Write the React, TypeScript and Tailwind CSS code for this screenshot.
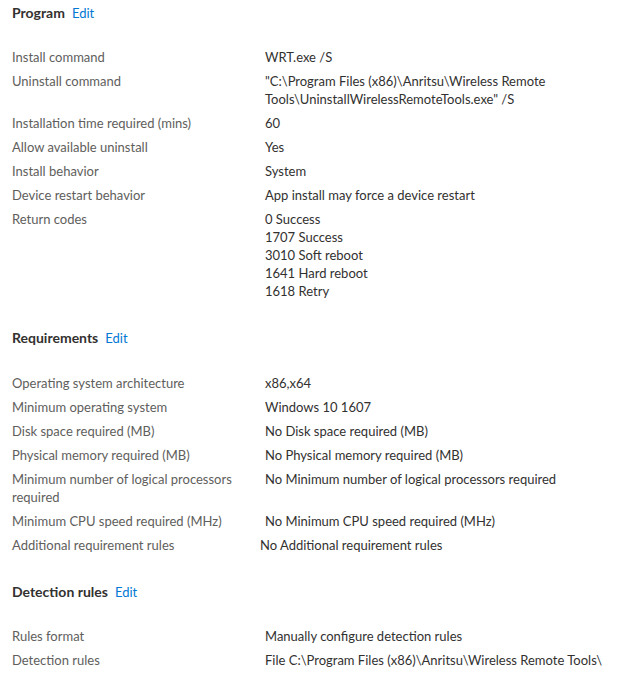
import React from "react";

type Row = { label: string; value: React.ReactNode; shift?: boolean };

function Section({ title, rows, wide }: { title: string; rows: Row[]; wide?: boolean }) {
  return (
    <section className="mb-[29px]">
      <div
        className={`flex items-baseline gap-[7px] h-[18px] leading-[18px] ${wide ? "mb-[27px]" : "mb-[26px]"}`}
      >
        <span className="text-[14px] font-bold text-[#323130]">{title}</span>
        <span className="text-[13px] text-[#0078d4]">Edit</span>
      </div>
      <div className="flex flex-col gap-[6px]">
        {rows.map((r) => (
          <div key={r.label} className="flex leading-[18px] text-[13px]">
            <div className="w-[253px] shrink-0 pr-[20px] text-[#605e5c]">{r.label}</div>
            <div className={`flex-1 pr-3 text-[#323130] ${r.shift ? "-ml-[5px]" : ""}`}>{r.value}</div>
          </div>
        ))}
      </div>
    </section>
  );
}

export default function App() {
  const program: Row[] = [
    { label: "Install command", value: "WRT.exe /S" },
    {
      label: "Uninstall command",
      value: '"C:\\Program Files (x86)\\Anritsu\\Wireless Remote Tools\\UninstallWirelessRemoteTools.exe" /S',
    },
    { label: "Installation time required (mins)", value: "60" },
    { label: "Allow available uninstall", value: "Yes" },
    { label: "Install behavior", value: "System" },
    { label: "Device restart behavior", value: "App install may force a device restart" },
    {
      label: "Return codes",
      value: (
        <div className="flex flex-col">
          <span>0 Success</span>
          <span>1707 Success</span>
          <span>3010 Soft reboot</span>
          <span>1641 Hard reboot</span>
          <span>1618 Retry</span>
        </div>
      ),
    },
  ];
  const reqs: Row[] = [
    { label: "Operating system architecture", value: "x86,x64" },
    { label: "Minimum operating system", value: "Windows 10 1607" },
    { label: "Disk space required (MB)", value: "No Disk space required (MB)" },
    { label: "Physical memory required (MB)", value: "No Physical memory required (MB)" },
    {
      label: "Minimum number of logical processors required",
      value: "No Minimum number of logical processors required",
    },
    { label: "Minimum CPU speed required (MHz)", value: "No Minimum CPU speed required (MHz)" },
    { label: "Additional requirement rules", value: "No Additional requirement rules", shift: true },
  ];
  const detection: Row[] = [
    { label: "Rules format", value: "Manually configure detection rules" },
    { label: "Detection rules", value: "File C:\\Program Files (x86)\\Anritsu\\Wireless Remote Tools\\" },
  ];
  return (
    <div className="min-h-[693px] bg-white px-3 pt-1" style={{ fontFamily: "Lato, sans-serif" }}>
      <Section title="Program" rows={program} />
      <Section title="Requirements" rows={reqs} wide />
      <Section title="Detection rules" rows={detection} />
    </div>
  );
}
